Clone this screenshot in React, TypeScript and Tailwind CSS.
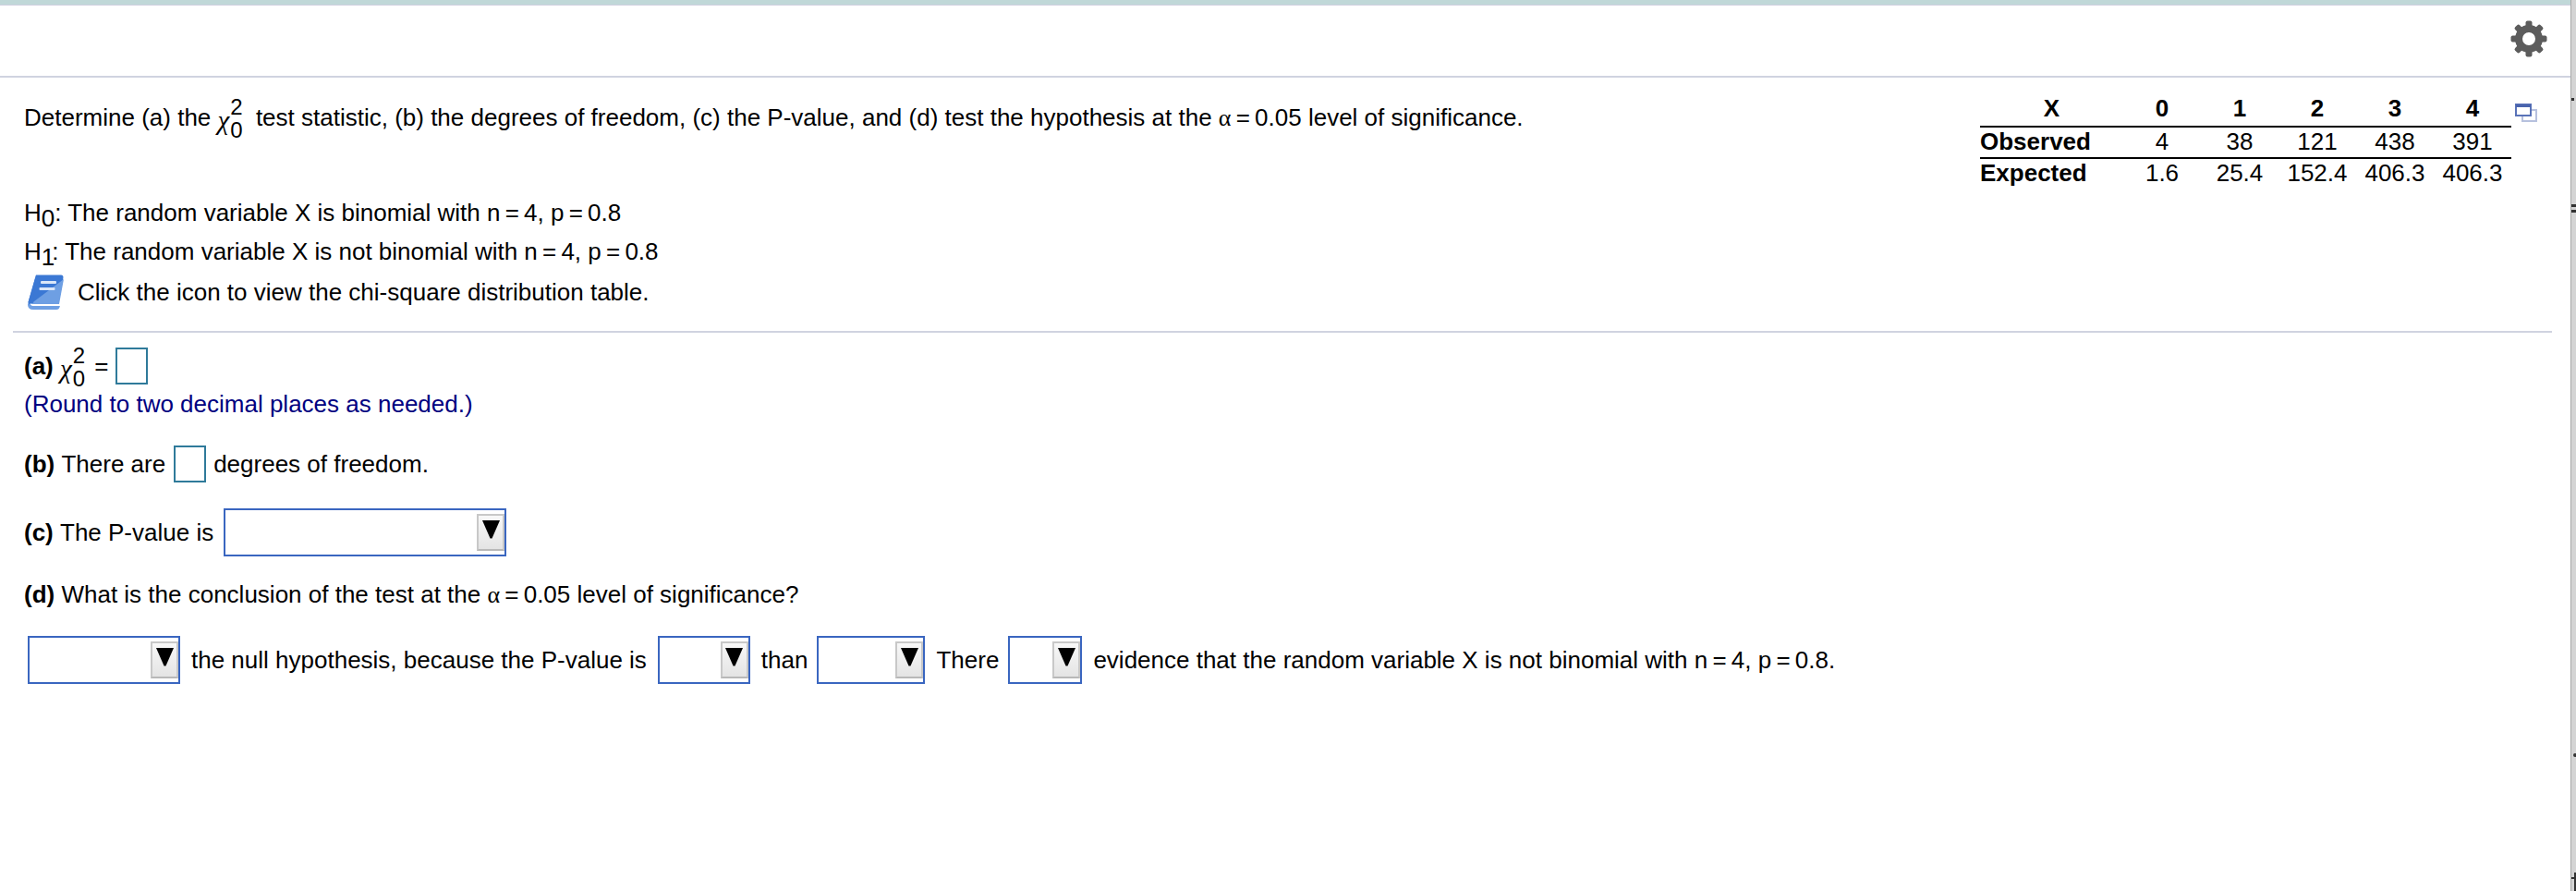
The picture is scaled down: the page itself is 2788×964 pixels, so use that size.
const chi = "\u03C7";
const alpha = "\u03B1";
const eq = "\u2009=\u2009";

function ChiSquare() {
  return (
    <span className="inline-flex items-center">
      <span className="relative top-[3px] font-['Liberation_Serif','DejaVu_Serif',serif] text-[29px] leading-none italic">{chi}</span>
      <span className="relative top-[1px] ml-[1px] flex flex-col items-center text-[24px] leading-[25px]">
        <span>2</span>
        <span>0</span>
      </span>
    </span>
  );
}

function Alpha() {
  return <span className="font-['Liberation_Serif','DejaVu_Serif',serif]">{alpha}</span>;
}

function Sub({ children, className = "" }: { children: string; className?: string }) {
  return <span className={`relative top-[6px] text-[26px] leading-none ${className}`}>{children}</span>;
}

function Input({ className = "" }: { className?: string }) {
  return <span className={`block h-[40px] w-[35px] shrink-0 border-2 border-[#2f7a9a] bg-white ${className}`} />;
}

function Select({ width }: { width: string }) {
  return (
    <span className={`flex h-[52px] shrink-0 items-center justify-end border-2 border-[#3a66c0] bg-white ${width}`}>
      <span className="flex h-[40px] w-[30px] justify-center border-2 border-[#c8c8c8] border-b-[#b8b8b8] bg-gradient-to-b from-[#f8f8f8] to-[#e4e4e4] pt-[5px]">
        <svg width="19" height="20" viewBox="0 0 19 20">
          <polygon points="0,0 19,0 10.5,19.5 8.5,19.5" fill="#000" />
        </svg>
      </span>
    </span>
  );
}

function GearIcon() {
  const teeth = [0, 45, 90, 135, 180, 225, 270, 315];
  return (
    <svg width="40" height="40" viewBox="0 0 40 40">
      {teeth.map((deg) => (
        <rect key={deg} x="16.5" y="0.5" width="7" height="8" rx="2" fill="#5c5c5c" transform={`rotate(${deg} 20 20)`} />
      ))}
      <circle cx="20" cy="20" r="11" fill="none" stroke="#5c5c5c" strokeWidth="8" />
    </svg>
  );
}

function BookIcon() {
  return (
    <svg width="42" height="40" viewBox="0 0 42 40" className="shrink-0">
      <path d="M10 1.5 H37 Q40 1.5 39.4 5 L34.5 32 H7 Q3 32 1.5 35 L1.5 31 Z" fill="#3b78d4" />
      <path d="M1 33 Q1 39 7 39 H32 Q35 39 35.6 36 L36 35 H8 Q4 35 4 33 L40 6 L35 33" fill="#6e9fe3" />
      <path d="M1.5 31 L10 1.5 L7 32 Z" fill="#3b78d4" />
      <rect x="15" y="8" width="17" height="3" rx="1" fill="#dbe7f8" />
      <rect x="13.5" y="15" width="17" height="3" rx="1" fill="#dbe7f8" />
    </svg>
  );
}

function WindowIcon() {
  return (
    <svg width="24" height="20" viewBox="0 0 24 20" className="mt-[28px] ml-[4px] shrink-0">
      <rect x="8" y="7" width="15" height="12" fill="#fff" stroke="#b7c1de" strokeWidth="2" />
      <rect x="1" y="1" width="16" height="12" fill="#fff" stroke="#5a73b8" strokeWidth="2" />
      <rect x="1" y="1" width="16" height="3" fill="#4a64ad" />
    </svg>
  );
}

const xs = ["0", "1", "2", "3", "4"];
const observed = ["4", "38", "121", "438", "391"];
const expected = ["1.6", "25.4", "152.4", "406.3", "406.3"];

function FrequencyTable() {
  return (
    <div className="mt-[16px] grid w-[575px] grid-cols-[155px_repeat(5,84px)] content-start self-start text-center text-[26px] leading-[35px] text-black">
      <div className="h-[38px] border-b-2 border-black font-bold">X</div>
      {xs.map((x) => (
        <div key={x} className="h-[38px] border-b-2 border-black font-bold">{x}</div>
      ))}
      <div className="h-[34px] border-b-2 border-black text-left leading-[30px] font-bold">Observed</div>
      {observed.map((v, i) => (
        <div key={i} className="h-[34px] border-b-2 border-black leading-[30px]">{v}</div>
      ))}
      <div className="h-[34px] text-left leading-[30px] font-bold">Expected</div>
      {expected.map((v, i) => (
        <div key={i} className="h-[34px] leading-[30px]">{v}</div>
      ))}
    </div>
  );
}

export default function App() {
  return (
    <div className="flex h-[964px] w-[2788px] overflow-hidden bg-white font-['Liberation_Sans',Arial,sans-serif] text-[26px] text-black">
      <main className="min-w-0 flex-1">
        <div className="h-[6px] border-b border-[#d0d0e0] bg-[#c0d8d8]" />
        <header className="flex h-[78px] items-start justify-end border-b-2 border-[#d0d3e0] pt-[16px] pr-[25px]">
          <GearIcon />
        </header>

        <section className="flex justify-between pl-[26px] pr-[36px]">
          <div>
            <p className="mt-[23px] flex h-[40px] items-center whitespace-pre">
              Determine (a) the <ChiSquare /><span className="ml-[7px]"> test statistic, (b) the degrees of freedom, (c) the P-value, and (d) test the hypothesis at the </span><Alpha />{eq}0.05 level of significance.
            </p>
            <p className="mt-[62px] flex h-[42px] items-center whitespace-pre">
              H<Sub>0</Sub>: The random variable X is binomial with n{eq}4, p{eq}0.8
            </p>
            <p className="flex h-[42px] items-center whitespace-pre">
              H<Sub className="-mr-[3px]">1</Sub>: The random variable X is not binomial with n{eq}4, p{eq}0.8
            </p>
            <p className="mt-[1px] ml-[3px] flex h-[44px] items-center gap-[13px]">
              <BookIcon />
              Click the icon to view the chi-square distribution table.
            </p>
          </div>
          <div className="flex">
            <FrequencyTable />
            <WindowIcon />
          </div>
        </section>

        <hr className="mt-[20px] mr-[20px] ml-[14px] border-t-2 border-[#d0d3e0]" />

        <div className="px-[26px]">
          <div className="mt-[16px] flex h-[40px] items-center whitespace-pre">
            <b>(a) </b><ChiSquare /><span className="mr-[8px] ml-[10px]">=</span><Input />
          </div>
          <p className="mt-[6px] h-[30px] leading-[30px] text-[#000080]">(Round to two decimal places as needed.)</p>
          <div className="mt-[30px] flex h-[40px] items-center whitespace-pre">
            <b>(b) </b>There are<Input className="mr-[8px] ml-[9px]" />degrees of freedom.
          </div>
          <div className="mt-[28px] flex h-[52px] items-center whitespace-pre">
            <b>(c) </b>The P-value is<Select width="ml-[11px] w-[306px]" />
          </div>
          <p className="mt-[26px] h-[30px] leading-[30px] whitespace-pre">
            <b>(d) </b>What is the conclusion of the test at the <Alpha />{eq}0.05 level of significance?
          </p>
          <div className="mt-[30px] ml-[4px] flex h-[52px] items-center whitespace-pre">
            <Select width="w-[165px]" />
            <span className="mx-[12px]">the null hypothesis, because the P-value is</span>
            <Select width="w-[100px]" />
            <span className="mr-[10px] ml-[12px]">than</span>
            <Select width="w-[117px]" />
            <span className="mr-[10px] ml-[12px]">There</span>
            <Select width="w-[80px]" />
            <span className="ml-[12px]">evidence that the random variable X is not binomial with n{eq}4, p{eq}0.8.</span>
          </div>
        </div>
      </main>

      <aside className="relative w-[6px] shrink-0 border-l border-[#a8a8a8] bg-[#d4d4d4]">
        <span className="absolute top-[106px] left-0 h-[3px] w-[3px] bg-[#333]" />
        <span className="absolute top-[221px] left-0 h-[3px] w-full bg-[#333]" />
        <span className="absolute top-[227px] left-0 h-[3px] w-full bg-[#333]" />
        <span className="absolute top-[815px] left-[2px] h-[4px] w-[4px] rounded-full bg-[#333]" />
        <span className="absolute top-[949px] left-0 h-[2px] w-full bg-[#333]" />
        <span className="absolute top-[944px] left-[3px] h-[20px] w-[2px] bg-[#333]" />
      </aside>
    </div>
  );
}
